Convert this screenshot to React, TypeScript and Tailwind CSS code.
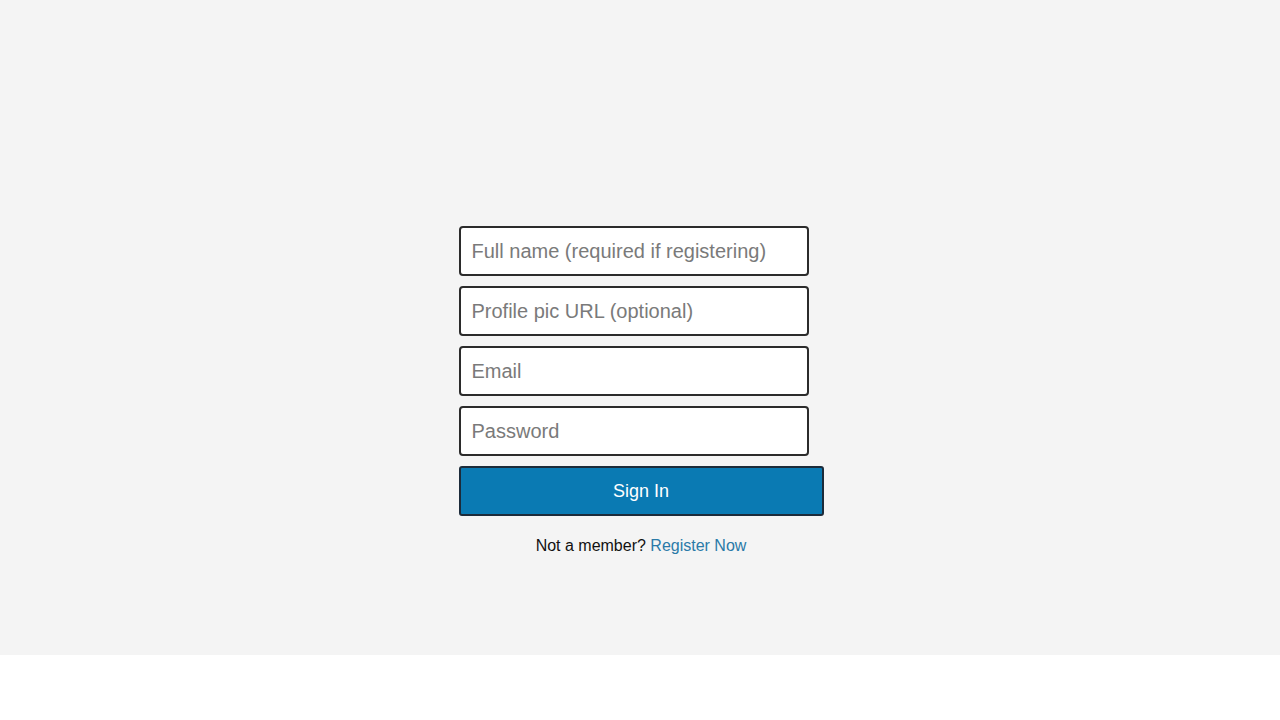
export default function App() {
  const fields = [
    "Full name (required if registering)",
    "Profile pic URL (optional)",
    "Email",
    "Password",
  ];
  return (
    <div className="w-[1280px] h-[720px] bg-white font-['Liberation_Sans',Arial,sans-serif]">
      <div className="h-[655px] bg-[#f4f4f4] flex flex-col items-center pt-[226px]">
        <form className="ml-[2px] w-[365px] flex flex-col gap-[10px]" onSubmit={(e) => e.preventDefault()}>
          {fields.map((f) => (
            <input
              key={f}
              type={f === "Password" ? "password" : "text"}
              placeholder={f}
              className="w-[350px] h-[50px] rounded-[4px] border-2 border-[#2b2b2b] bg-white px-[11px] text-[20px] text-[#222] placeholder:text-[#7a7a7a] outline-none"
            />
          ))}
          <button
            type="submit"
            className="w-[365px] h-[50px] rounded-[3px] border-2 border-[#1c2b3a] bg-[#0a7ab3] text-[18px] text-white"
          >
            Sign In
          </button>
          <p className="mt-[8px] text-center text-[16px] text-[#111]">
            Not a member? <a href="#" className="text-[#2a7aa8]">Register Now</a>
          </p>
        </form>
      </div>
    </div>
  );
}
